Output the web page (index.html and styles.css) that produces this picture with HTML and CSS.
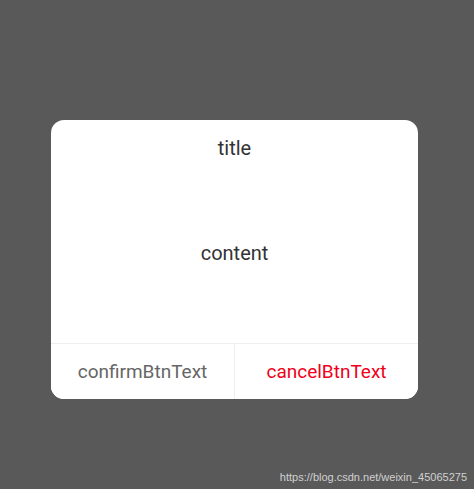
FILE: index.html
```html
<!DOCTYPE html>
<html lang="en">
<head>
    <meta charset="UTF-8">
    <meta name="viewport" content="width=device-width, initial-scale=1.0">
    <title>Dialog</title>
    <link rel="stylesheet" href="styles.css">
</head>
<body>

<div class="dialog">
    <div class="dialog-title">title</div>
    <div class="dialog-content">content</div>
    <div class="dialog-buttons">
        <button class="btn btn-confirm">confirmBtnText</button>
        <button class="btn btn-cancel">cancelBtnText</button>
    </div>
</div>

<div class="watermark">https://blog.csdn.net/weixin_45065275</div>

</body>
</html>
```

FILE: styles.css
```css
html, body {
    height: 100%;
}
body {
    margin: 0;
    padding: 120px 0 0 51px;
    box-sizing: border-box;
    background: #595959;
    font-family: Roboto, "Noto Sans", Arial, sans-serif;
    position: relative;
}
.dialog {
    width: 367px;
    background: #fff;
    border-radius: 13px;
    overflow: hidden;
}
.dialog-title {
    padding-top: 16px;
    line-height: 24px;
    font-size: 20px;
    color: #333;
    text-align: center;
}
.dialog-content {
    padding: 81px 0 78px;
    line-height: 24px;
    font-size: 20px;
    color: #333;
    text-align: center;
}
.dialog-buttons {
    display: flex;
    border-top: 1px solid #eee;
}
.btn {
    flex: 1;
    height: 55px;
    border: none;
    background: #fff;
    font-family: inherit;
    font-size: 19px;
    padding: 0;
    cursor: pointer;
}
.btn-confirm {
    color: #666;
    border-right: 1px solid #eee;
}
.btn-cancel {
    color: #f0001a;
}
.watermark {
    position: absolute;
    right: 7px;
    bottom: 6px;
    font-family: Arial, "Liberation Sans", sans-serif;
    font-size: 11px;
    color: #d0d0d0;
}
```
